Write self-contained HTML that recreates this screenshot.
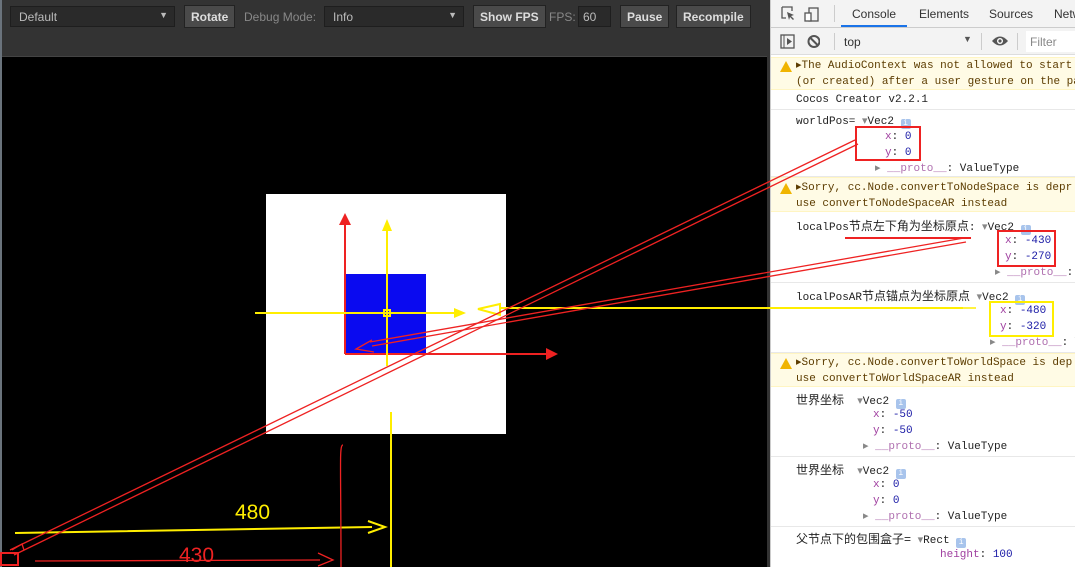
<!DOCTYPE html>
<html><head><meta charset="utf-8"><style>
*{margin:0;padding:0;box-sizing:border-box}
body{width:1075px;height:567px;overflow:hidden;position:relative;background:#000;font-family:"Liberation Sans",sans-serif}
#tb{position:absolute;left:0;top:0;width:770px;height:57px;background:#333;border-bottom:1px solid #444}
#game{position:absolute;left:2px;top:58px;width:765px;height:509px;background:#000}
#lstrip{position:absolute;left:0;top:0;width:2px;height:567px;background:#6a737c}
.sel{position:absolute;top:6px;height:21px;background:#2a2a2a;border:1px solid #1e1e1e;color:#bbb;font-size:12px;padding:3px 8px}
.sel b{position:absolute;right:6px;top:3px;font-size:9px;font-weight:normal}
.btn{position:absolute;top:5px;height:23px;background:#4a4a4a;border:1px solid #222;color:#ddd;font-size:12px;font-weight:bold;padding:4px 6px}
.lbl{position:absolute;top:10px;color:#888;font-size:12px}
#dt{position:absolute;left:770px;top:0;width:305px;height:567px;background:#fff;border-left:1px solid #ccc;font-family:"Liberation Mono","Noto Sans CJK SC",monospace;font-size:11px;color:#222}
#tabs{height:28px;background:#f3f3f3;border-bottom:1px solid #ccc;position:relative;font-family:"Liberation Sans",sans-serif;font-size:12px;color:#333}
#tabs span{position:absolute;top:7px}
#bar2{height:27px;background:#f3f3f3;border-bottom:1px solid #ddd;position:relative;font-family:"Liberation Sans",sans-serif;font-size:12px;color:#333}
.row{position:absolute;left:0;width:305px;border-bottom:1px solid #e8e8e8}
.warn{background:#fffbe5;border-top:1px solid #fff5c2;border-bottom:1px solid #fff5c2;color:#5c3c00}
.t{position:absolute;white-space:pre;line-height:16px}
.k{color:#a040a0}.v{color:#1a1aa6}.g{color:#888}
.i{display:inline-block;width:10px;height:10px;background:#a8c4ec;color:#fff;font-size:8px;text-align:center;line-height:10px;border-radius:2px;vertical-align:-1px}
.cj{font-family:"Liberation Sans","Noto Sans CJK SC",sans-serif;font-size:12px;line-height:16px}
.tri{position:absolute;left:9px;width:0;height:0;border-left:6px solid transparent;border-right:6px solid transparent;border-bottom:11px solid #f0b400}
</style></head><body>
<div id="tb">
<div class="sel" style="left:10px;width:165px">Default<b>▼</b></div>
<div class="btn" style="left:184px">Rotate</div>
<div class="lbl" style="left:244px">Debug Mode:</div>
<div class="sel" style="left:324px;width:140px">Info<b>▼</b></div>
<div class="btn" style="left:473px">Show FPS</div>
<div class="lbl" style="left:549px">FPS:</div>
<div class="sel" style="left:578px;width:33px;padding:3px 4px">60</div>
<div class="btn" style="left:620px">Pause</div>
<div class="btn" style="left:676px">Recompile</div>
</div>
<div id="game"></div>
<div id="lstrip"></div>
<div style="position:absolute;left:767px;top:0;width:3px;height:567px;background:#333"></div>
<div style="position:absolute;left:266px;top:194px;width:240px;height:240px;background:#fff"></div>
<div style="position:absolute;left:346px;top:274px;width:80px;height:80px;background:#0a0af0"></div>
<div id="dt">
<div id="tabs">
<svg style="position:absolute;left:10px;top:6px" width="40" height="16"><path d="M1 1h10v4M1 1v11h4" fill="none" stroke="#555" stroke-width="1.3"/><path d="M6 6l7 3-3 1 3 3-1 1-3-3-1 3z" fill="#555"/><rect x="28" y="2" width="9" height="13" fill="none" stroke="#555" stroke-width="1.3"/><rect x="24" y="7" width="6" height="8" fill="#fff" stroke="#555" stroke-width="1.3"/></svg>
<div style="position:absolute;left:63px;top:5px;width:1px;height:17px;background:#ccc"></div>
<span style="left:81px">Console</span>
<div style="position:absolute;left:70px;top:25px;width:66px;height:2px;background:#1a73e8"></div>
<span style="left:148px">Elements</span><span style="left:218px">Sources</span><span style="left:283px">Netw</span>
</div>
<div id="bar2">
<svg style="position:absolute;left:9px;top:6px" width="40" height="16"><rect x="1" y="1" width="13" height="13" fill="none" stroke="#555" stroke-width="1.3"/><path d="M4 1v13" stroke="#555"/><path d="M7 4l5 3.5-5 3.5z" fill="#555"/><circle cx="34" cy="7.5" r="5.5" fill="none" stroke="#555" stroke-width="2"/><path d="M30 3.5l8 8" stroke="#555" stroke-width="2"/></svg>
<div style="position:absolute;left:63px;top:5px;width:1px;height:17px;background:#ccc"></div>
<span style="position:absolute;left:73px;top:7px">top</span>
<span style="position:absolute;left:192px;top:6px;font-size:9px;color:#555">▼</span>
<div style="position:absolute;left:210px;top:5px;width:1px;height:17px;background:#ccc"></div>
<svg style="position:absolute;left:220px;top:7px" width="18" height="12"><path d="M1 6Q9 -3 17 6Q9 15 1 6z" fill="#555"/><circle cx="9" cy="6" r="3" fill="#fff"/><circle cx="9" cy="6" r="1.6" fill="#555"/></svg>
<div style="position:absolute;left:246px;top:5px;width:1px;height:17px;background:#ccc"></div>
<div style="position:absolute;left:255px;top:3px;width:50px;height:21px;background:#fff"><span style="position:absolute;left:4px;top:4px;color:#888">Filter</span></div>
</div>
<div class="row warn" style="top:57px;height:33px"><div class="tri" style="top:3px"></div><div class="t" style="left:25px;top:0px">▸The AudioContext was not allowed to start
(or created) after a user gesture on the pa</div></div>
<div class="row" style="top:90px;height:20px"><div class="t" style="left:25px;top:2px">Cocos Creator v2.2.1</div></div>
<div class="row" style="top:110px;height:67px"><div class="t" style="left:25px;top:4px">worldPos= <span class="g">▾</span>Vec2 <span class="i">i</span></div>
<div class="t" style="left:114px;top:19px"><span class="k">x</span>: <span class="v">0</span>
<span class="k">y</span>: <span class="v">0</span></div>
<div class="t" style="left:104px;top:51px"><span class="g">▸</span> <span class="k" style="color:#b070b0">__proto__</span>: ValueType</div></div>
<div class="row warn" style="top:177px;height:35px"><div class="tri" style="top:5px"></div><div class="t" style="left:25px;top:2px">▸Sorry, cc.Node.convertToNodeSpace is depr
use convertToNodeSpaceAR instead</div></div>
<div class="row" style="top:212px;height:71px"><div class="t" style="left:25px;top:6px">localPos<span class="cj">节点左下角为坐标原点</span>: <span class="g">▾</span>Vec2 <span class="i">i</span></div>
<div class="t" style="left:234px;top:21px"><span class="k">x</span>: <span class="v">-430</span>
<span class="k">y</span>: <span class="v">-270</span></div>
<div class="t" style="left:224px;top:53px"><span class="g">▸</span> <span class="k" style="color:#b070b0">__proto__</span>: V</div></div>
<div class="row" style="top:283px;height:70px"><div class="t" style="left:25px;top:5px">localPosAR<span class="cj">节点锚点为坐标原点</span> <span class="g">▾</span>Vec2 <span class="i">i</span></div>
<div class="t" style="left:229px;top:20px"><span class="k">x</span>: <span class="v">-480</span>
<span class="k">y</span>: <span class="v">-320</span></div>
<div class="t" style="left:219px;top:52px"><span class="g">▸</span> <span class="k" style="color:#b070b0">__proto__</span>: V</div></div>
<div class="row warn" style="top:353px;height:34px"><div class="tri" style="top:4px"></div><div class="t" style="left:25px;top:1px">▸Sorry, cc.Node.convertToWorldSpace is dep
use convertToWorldSpaceAR instead</div></div>
<div class="row" style="top:387px;height:70px"><div class="t" style="left:25px;top:5px"><span class="cj">世界坐标</span>  <span class="g">▾</span>Vec2 <span class="i">i</span></div>
<div class="t" style="left:102px;top:20px"><span class="k">x</span>: <span class="v">-50</span>
<span class="k">y</span>: <span class="v">-50</span></div>
<div class="t" style="left:92px;top:52px"><span class="g">▸</span> <span class="k" style="color:#b070b0">__proto__</span>: ValueType</div></div>
<div class="row" style="top:457px;height:70px"><div class="t" style="left:25px;top:5px"><span class="cj">世界坐标</span>  <span class="g">▾</span>Vec2 <span class="i">i</span></div>
<div class="t" style="left:102px;top:20px"><span class="k">x</span>: <span class="v">0</span>
<span class="k">y</span>: <span class="v">0</span></div>
<div class="t" style="left:92px;top:52px"><span class="g">▸</span> <span class="k" style="color:#b070b0">__proto__</span>: ValueType</div></div>
<div class="row" style="top:527px;height:40px;border:none"><div class="t" style="left:25px;top:4px"><span class="cj">父节点下的包围盒子=</span> <span class="g">▾</span>Rect <span class="i">i</span></div>
<div class="t" style="left:169px;top:20px"><span class="k">height</span>: <span class="v">100</span></div></div>
</div>
<svg style="position:absolute;left:0;top:0" width="1075" height="567">
<g fill="none" stroke="#ee2222" stroke-width="2">
<path d="M345 354V222M345 354H548"/>
</g>
<path d="M345 213l-6 12h12z M558 354l-12-6v12z" fill="#ee2222"/>
<g stroke="#ffee00" stroke-width="2" fill="none">
<path d="M387 228V366M255 313H456"/>
<rect x="384" y="310" width="6" height="6"/>
<path d="M391 412V567"/>
<path d="M963 308H500M500 304l-22 5 22 6z"/>
<path d="M15 533L372 527M368 521l17 6-17 6"/>
</g>
<path d="M387 219l-5 12h10z M466 313l-12-5v10z" fill="#ffee00"/>
<g stroke="#ee2222" stroke-width="1.3" fill="none">
<path d="M855 140L10 550M858 144L14 555"/>
<path d="M964 238L370 342M966 242L372 346M372 340l-16 9 18 3"/>
<path d="M12 550l10-6 2 6"/>
<rect x="1" y="553" width="17" height="12" stroke-width="2"/>
<path d="M35 561L320 560M318 553l15 7-15 6"/>
<path d="M343 445c-4 0-2 20-2 122"/>
</g>
<g stroke="#ee2222" stroke-width="2" fill="none">
<rect x="856" y="127" width="64" height="33"/>
<rect x="998" y="231" width="57" height="35"/>
<path d="M845 238H971"/>
</g>
<path d="M860 308H976" stroke="#ffee00" stroke-width="1.5"/>
<rect x="990" y="302" width="63" height="34" fill="none" stroke="#ffee00" stroke-width="2"/>
<text x="235" y="519" fill="#ffee00" font-family="Liberation Sans" font-size="21">480</text>
<text x="179" y="562" fill="#ee2222" font-family="Liberation Sans" font-size="21">430</text>
</svg>
</body></html>
